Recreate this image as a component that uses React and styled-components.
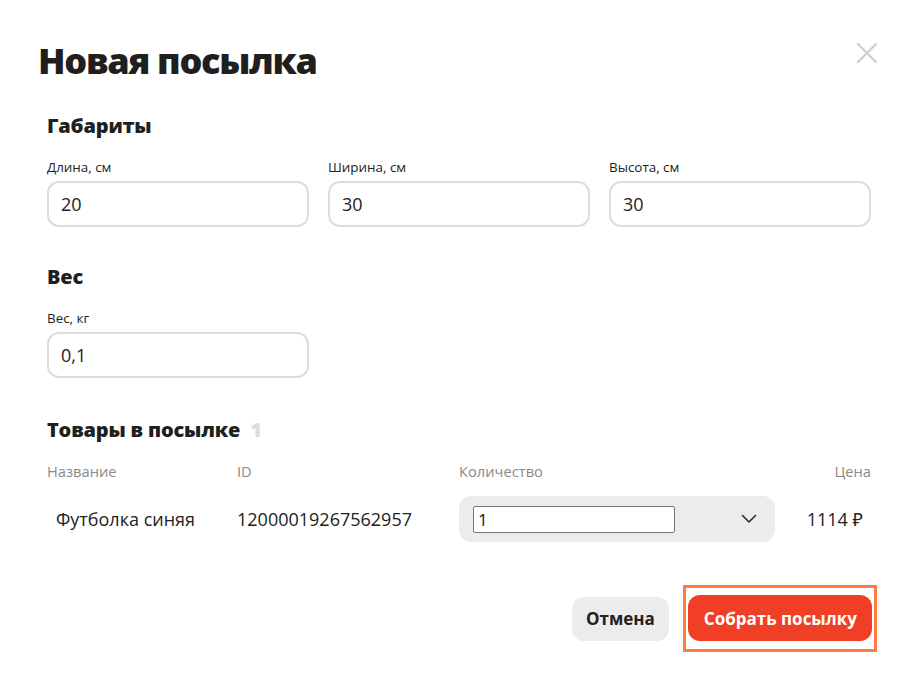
import styled, { createGlobalStyle } from "styled-components";

const GlobalStyle = createGlobalStyle`
  body {
    margin: 0;
    background: #ffffff;
    font-family: "Open Sans", "Noto Sans", sans-serif;
    color: #222222;
  }
`;

const Modal = styled.div`
  width: 918px;
  height: 679px;
  box-sizing: border-box;
  padding: 35px 47px 0 47px;
  background: #ffffff;
`;

const Header = styled.div`
  display: flex;
  justify-content: space-between;
  align-items: flex-start;
`;

const Title = styled.h1`
  margin: 0 0 0 -9px;
  font-size: 36px;
  line-height: 52px;
  font-weight: 800;
  letter-spacing: -1.3px;
  color: #1f1f1f;
`;

const CloseButton = styled.button`
  border: none;
  background: none;
  padding: 0;
  margin: 7px -7px 0 0;
  width: 22px;
  height: 22px;
  cursor: pointer;
  display: flex;
`;

const Section = styled.section`
  margin-top: ${(p) => p.$top}px;
`;

const SectionTitle = styled.h2`
  margin: 0;
  font-size: 20px;
  line-height: 28px;
  font-weight: 800;
  color: #1f1f1f;
  letter-spacing: -0.2px;
`;

const Count = styled.span`
  color: #dcdcdc;
  margin-left: 10px;
`;

const FieldRow = styled.div`
  display: grid;
  grid-template-columns: repeat(3, 262px);
  gap: 19px;
  margin-top: 18px;
`;

const Field = styled.label`
  display: flex;
  flex-direction: column;
`;

const Label = styled.span`
  font-size: 13.4px;
  line-height: 18px;
  color: #222222;
  margin-bottom: 5px;
`;

const Input = styled.input`
  box-sizing: border-box;
  width: 262px;
  height: 46px;
  border: 2px solid #dcdcdc;
  border-radius: 12px;
  padding: 0 12px;
  font-family: "Open Sans", sans-serif;
  font-size: 18px;
  color: #222222;
  outline: none;
`;

const Table = styled.div`
  display: grid;
  grid-template-columns: 190px 222px 316px 1fr;
  margin-top: 17px;
  align-items: center;
`;

const HeadCell = styled.div`
  font-size: 14.7px;
  line-height: 20px;
  color: #8a8a8a;
  text-align: ${(p) => (p.$right ? "right" : "left")};
`;

const Cell = styled.div`
  font-size: 18px;
  line-height: 24px;
  color: #222222;
  margin-top: 15px;
  padding-left: ${(p) => p.$indent || 0}px;
  padding-right: ${(p) => p.$pr || 0}px;
  text-align: ${(p) => (p.$right ? "right" : "left")};
`;

const QtySelect = styled.div`
  display: flex;
  align-items: center;
  justify-content: space-between;
  height: 46px;
  background: #ececec;
  border-radius: 12px;
  padding: 0 18px 0 14px;
  margin-top: 15px;
`;

const QtyInput = styled.input`
  box-sizing: border-box;
  width: 202px;
  height: 27px;
  border: 1px solid #767676;
  border-radius: 2px;
  padding: 0 4px;
  font-family: "Open Sans", sans-serif;
  font-size: 17px;
  color: #111111;
  background: #ffffff;
`;

const Footer = styled.div`
  display: flex;
  justify-content: flex-end;
  align-items: center;
  gap: 14px;
  margin: 43px -6px 0 0;
`;

const CancelButton = styled.button`
  height: 44px;
  padding: 0 14px;
  border: none;
  border-radius: 12px;
  background: #ececec;
  font-family: "Open Sans", sans-serif;
  font-size: 17px;
  font-weight: 700;
  color: #222222;
  cursor: pointer;
`;

const FocusRing = styled.span`
  display: inline-flex;
  border: 3px solid #ff7a3c;
  padding: 7px 2px 8px 2px;
`;

const SubmitButton = styled.button`
  height: 46px;
  padding: 0 15px 0 16px;
  border: none;
  border-radius: 12px;
  background: #f03f24;
  font-family: "Open Sans", sans-serif;
  font-size: 17px;
  font-weight: 700;
  color: #ffffff;
  cursor: pointer;
`;

function CloseIcon() {
  return (
    <svg width="22" height="22" viewBox="0 0 22 22" fill="none">
      <path d="M2 2 L20 20 M20 2 L2 20" stroke="#cfcfcf" strokeWidth="2.4" strokeLinecap="round" />
    </svg>
  );
}

function Chevron() {
  return (
    <svg width="16" height="10" viewBox="0 0 16 10" fill="none">
      <path d="M1.5 1.5 L8 8 L14.5 1.5" stroke="#2a2a2a" strokeWidth="1.6" strokeLinecap="round" strokeLinejoin="round" />
    </svg>
  );
}

const dimensions = [
  { label: "Длина, см", value: "20" },
  { label: "Ширина, см", value: "30" },
  { label: "Высота, см", value: "30" },
];

export default function App() {
  return (
    <>
      <GlobalStyle />
      <Modal>
        <Header>
          <Title>Новая посылка</Title>
          <CloseButton aria-label="Закрыть">
            <CloseIcon />
          </CloseButton>
        </Header>

        <Section $top={25}>
          <SectionTitle>Габариты</SectionTitle>
          <FieldRow>
            {dimensions.map((d) => (
              <Field key={d.label}>
                <Label>{d.label}</Label>
                <Input defaultValue={d.value} />
              </Field>
            ))}
          </FieldRow>
        </Section>

        <Section $top={36}>
          <SectionTitle>Вес</SectionTitle>
          <FieldRow>
            <Field>
              <Label>Вес, кг</Label>
              <Input defaultValue="0,1" />
            </Field>
          </FieldRow>
        </Section>

        <Section $top={38}>
          <SectionTitle>
            Товары в посылке<Count>1</Count>
          </SectionTitle>
          <Table>
            <HeadCell>Название</HeadCell>
            <HeadCell>ID</HeadCell>
            <HeadCell>Количество</HeadCell>
            <HeadCell $right>Цена</HeadCell>

            <Cell $indent={9}>Футболка синяя</Cell>
            <Cell>12000019267562957</Cell>
            <QtySelect>
              <QtyInput defaultValue="1" />
              <Chevron />
            </QtySelect>
            <Cell $right $pr={8}>1114 ₽</Cell>
          </Table>
        </Section>

        <Footer>
          <CancelButton>Отмена</CancelButton>
          <FocusRing>
            <SubmitButton>Собрать посылку</SubmitButton>
          </FocusRing>
        </Footer>
      </Modal>
    </>
  );
}
